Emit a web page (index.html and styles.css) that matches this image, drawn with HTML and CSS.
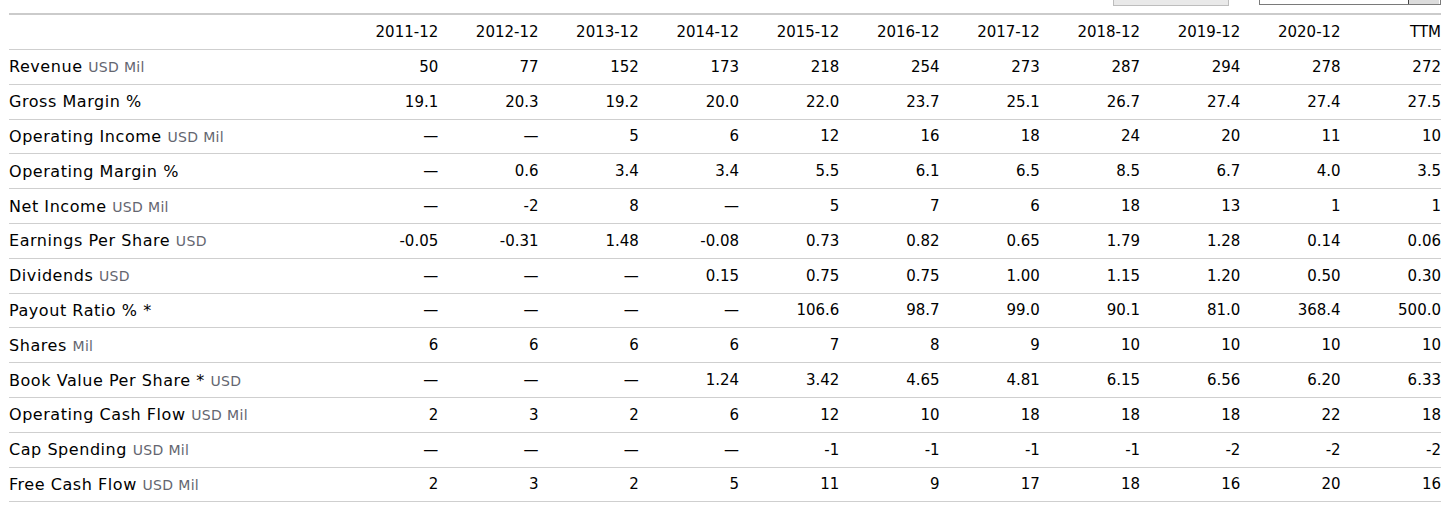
FILE: index.html
```html
<!DOCTYPE html>
<html>
<head>
<meta charset="utf-8">
<link rel="stylesheet" href="styles.css">
</head>
<body>
<div class="page">
  <div class="toolbar">
    <div class="btn"></div>
    <div class="select"><span class="select-arrow"></span></div>
  </div>
  <table class="fin">
    <thead>
      <tr>
        <th class="label"></th>
        <th>2011-12</th><th>2012-12</th><th>2013-12</th><th>2014-12</th><th>2015-12</th><th>2016-12</th><th>2017-12</th><th>2018-12</th><th>2019-12</th><th>2020-12</th><th>TTM</th>
      </tr>
    </thead>
    <tbody>
      <tr><td class="label">Revenue <span class="unit">USD Mil</span></td><td>50</td><td>77</td><td>152</td><td>173</td><td>218</td><td>254</td><td>273</td><td>287</td><td>294</td><td>278</td><td>272</td></tr>
      <tr><td class="label">Gross Margin %</td><td>19.1</td><td>20.3</td><td>19.2</td><td>20.0</td><td>22.0</td><td>23.7</td><td>25.1</td><td>26.7</td><td>27.4</td><td>27.4</td><td>27.5</td></tr>
      <tr><td class="label">Operating Income <span class="unit">USD Mil</span></td><td>—</td><td>—</td><td>5</td><td>6</td><td>12</td><td>16</td><td>18</td><td>24</td><td>20</td><td>11</td><td>10</td></tr>
      <tr><td class="label">Operating Margin %</td><td>—</td><td>0.6</td><td>3.4</td><td>3.4</td><td>5.5</td><td>6.1</td><td>6.5</td><td>8.5</td><td>6.7</td><td>4.0</td><td>3.5</td></tr>
      <tr><td class="label">Net Income <span class="unit">USD Mil</span></td><td>—</td><td>-2</td><td>8</td><td>—</td><td>5</td><td>7</td><td>6</td><td>18</td><td>13</td><td>1</td><td>1</td></tr>
      <tr><td class="label">Earnings Per Share <span class="unit">USD</span></td><td>-0.05</td><td>-0.31</td><td>1.48</td><td>-0.08</td><td>0.73</td><td>0.82</td><td>0.65</td><td>1.79</td><td>1.28</td><td>0.14</td><td>0.06</td></tr>
      <tr><td class="label">Dividends <span class="unit">USD</span></td><td>—</td><td>—</td><td>—</td><td>0.15</td><td>0.75</td><td>0.75</td><td>1.00</td><td>1.15</td><td>1.20</td><td>0.50</td><td>0.30</td></tr>
      <tr><td class="label">Payout Ratio % *</td><td>—</td><td>—</td><td>—</td><td>—</td><td>106.6</td><td>98.7</td><td>99.0</td><td>90.1</td><td>81.0</td><td>368.4</td><td>500.0</td></tr>
      <tr><td class="label">Shares <span class="unit">Mil</span></td><td>6</td><td>6</td><td>6</td><td>6</td><td>7</td><td>8</td><td>9</td><td>10</td><td>10</td><td>10</td><td>10</td></tr>
      <tr><td class="label">Book Value Per Share * <span class="unit">USD</span></td><td>—</td><td>—</td><td>—</td><td>1.24</td><td>3.42</td><td>4.65</td><td>4.81</td><td>6.15</td><td>6.56</td><td>6.20</td><td>6.33</td></tr>
      <tr><td class="label">Operating Cash Flow <span class="unit">USD Mil</span></td><td>2</td><td>3</td><td>2</td><td>6</td><td>12</td><td>10</td><td>18</td><td>18</td><td>18</td><td>22</td><td>18</td></tr>
      <tr><td class="label">Cap Spending <span class="unit">USD Mil</span></td><td>—</td><td>—</td><td>—</td><td>—</td><td>-1</td><td>-1</td><td>-1</td><td>-1</td><td>-2</td><td>-2</td><td>-2</td></tr>
      <tr><td class="label">Free Cash Flow <span class="unit">USD Mil</span></td><td>2</td><td>3</td><td>2</td><td>5</td><td>11</td><td>9</td><td>17</td><td>18</td><td>16</td><td>20</td><td>16</td></tr>
    </tbody>
  </table>
</div>
</body>
</html>
```
FILE: styles.css
```css
html, body {
  margin: 0;
  padding: 0;
  background: #fff;
}
body {
  font-family: "DejaVu Sans", Verdana, sans-serif;
  color: #000;
}
.page {
  padding-left: 9px;
  width: 1432px;
}
.toolbar {
  height: 13px;
  overflow: hidden;
  display: flex;
  justify-content: flex-end;
  align-items: flex-start;
}
.btn {
  width: 114px;
  height: 22px;
  margin-top: -18px;
  margin-right: 30px;
  background: #e9e9e9;
  border: 1px solid #bdbdbd;
}
.select {
  width: 180px;
  height: 22px;
  margin-top: -19px;
  border: 1px solid #7a7a7a;
  background: #fff;
  display: flex;
  justify-content: flex-end;
}
.select-arrow {
  width: 30px;
  margin-right: 1px;
  background: #dcdcdc;
  border-left: 1px solid #444;
}
.fin {
  width: 1432px;
  border-collapse: collapse;
  table-layout: fixed;
  border-top: 2px solid #cbcbcb;
}
.fin th, .fin td {
  padding: 0;
  text-align: right;
  font-weight: normal;
  font-size: 15px;
  white-space: nowrap;
  border-bottom: 1px solid #cfcfcf;
  vertical-align: middle;
}
.fin th {
  height: 34px;
}
.fin td {
  height: 33.8px;
}
.fin .label {
  width: 329px;
  text-align: left;
  font-size: 16px;
  letter-spacing: 0.55px;
}
.unit {
  color: #646670;
  font-size: 14px;
  letter-spacing: 0.35px;
}
```
